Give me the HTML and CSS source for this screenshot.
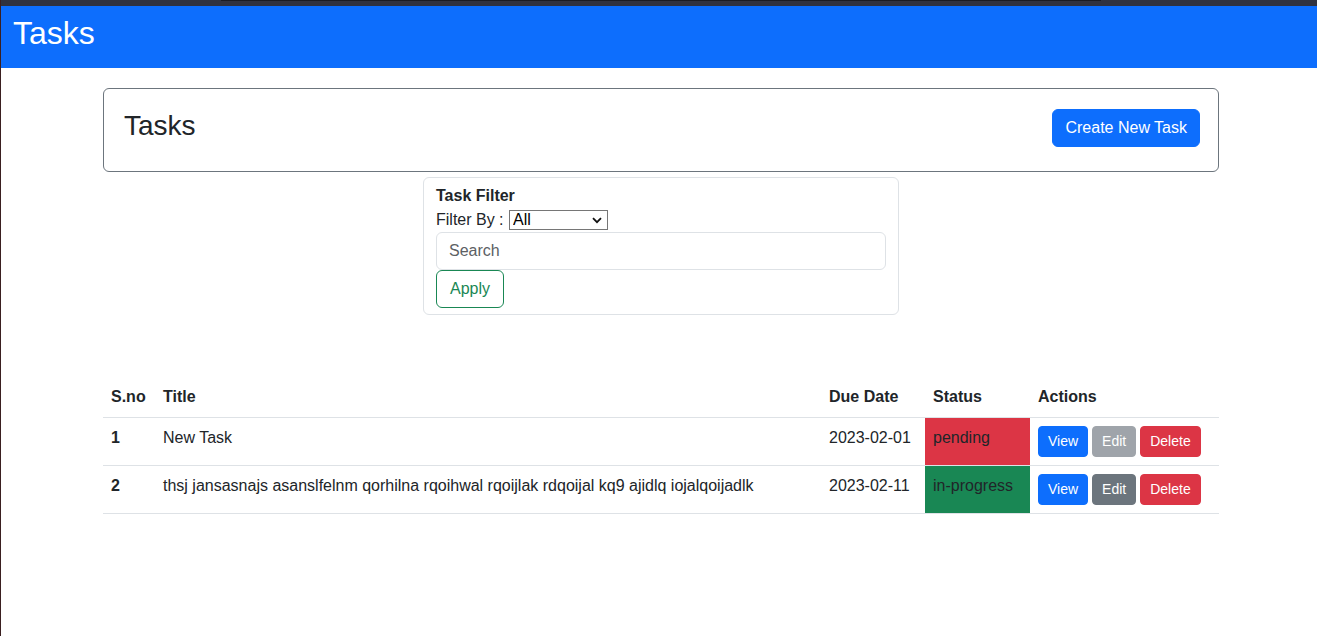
FILE: index.html
```html
<!DOCTYPE html>
<html lang="en">
<head>
<meta charset="utf-8">
<title>Tasks</title>
<link rel="stylesheet" href="styles.css">
</head>
<body>
<div class="chrome"><div class="chrome-line"></div></div>
<nav class="navbar"><span class="brand">Tasks</span></nav>
<main class="container">
  <section class="head-card">
    <h3 class="head-title">Tasks</h3>
    <button class="btn btn-primary">Create New Task</button>
  </section>

  <section class="filter-card">
    <div class="filter-title">Task Filter</div>
    <div class="filter-row">
      <label for="filterBy">Filter By : </label><span class="select-wrap"><select id="filterBy" class="select"><option>All</option><option>pending</option><option>in-progress</option><option>completed</option></select><svg class="chev" width="10" height="7" viewBox="0 0 10 7"><path d="M1 1.2 L5 5.2 L9 1.2" fill="none" stroke="#111" stroke-width="1.8"/></svg></span>
    </div>
    <input class="search" type="text" placeholder="Search">
    <button class="btn btn-outline-success">Apply</button>
  </section>

  <table class="table">
    <colgroup>
      <col class="c-sno"><col class="c-title"><col class="c-date"><col class="c-status"><col class="c-actions">
    </colgroup>
    <thead>
      <tr><th>S.no</th><th>Title</th><th>Due Date</th><th>Status</th><th>Actions</th></tr>
    </thead>
    <tbody>
      <tr>
        <th>1</th>
        <td>New Task</td>
        <td>2023-02-01</td>
        <td class="st-pending">pending</td>
        <td><div class="actions"><button class="btn-sm b-blue">View</button><button class="btn-sm b-gray disabled">Edit</button><button class="btn-sm b-red">Delete</button></div></td>
      </tr>
      <tr>
        <th>2</th>
        <td>thsj jansasnajs asanslfelnm qorhilna rqoihwal rqoijlak rdqoijal kq9 ajidlq iojalqoijadlk</td>
        <td>2023-02-11</td>
        <td class="st-progress">in-progress</td>
        <td><div class="actions"><button class="btn-sm b-blue">View</button><button class="btn-sm b-gray">Edit</button><button class="btn-sm b-red">Delete</button></div></td>
      </tr>
    </tbody>
  </table>
</main>
</body>
</html>
```

FILE: styles.css
```css
* { box-sizing: border-box; }
html, body { margin: 0; padding: 0; }
body {
  font-family: "Liberation Sans", Arial, sans-serif;
  font-size: 16px;
  line-height: 24px;
  color: #212529;
  background: #fff;
  border-left: 1px solid #3a1f20;
  min-height: 636px;
}
.chrome {
  height: 6px;
  background: #30323f;
}
.chrome-line {
  width: 880px;
  height: 1px;
  margin-left: 220px;
  background: #1b1c23;
}
.navbar {
  height: 62px;
  background: #0d6efd;
  padding: 8px 12px 16px;
}
.brand {
  color: #fff;
  font-size: 32px;
  line-height: 38px;
  display: block;
}
.container {
  width: 1116px;
  margin-left: 102px;
  padding-top: 20px;
}
.head-card {
  border: 1px solid #6c757d;
  border-radius: 6px;
  padding: 20px 18px 20px 20px;
  display: flex;
  justify-content: space-between;
  align-items: flex-start;
}
.head-title {
  margin: 0 0 8px;
  font-size: 28px;
  line-height: 33.6px;
  font-weight: 500;
}
.btn {
  font-family: inherit;
  font-size: 16px;
  line-height: 24px;
  padding: 6px 12px;
  border-radius: 6px;
  border: 1px solid transparent;
  cursor: pointer;
}
.btn-primary {
  background: #0d6efd;
  border-color: #0d6efd;
  color: #fff;
}
.btn-outline-success {
  background: #fff;
  border-color: #198754;
  color: #198754;
  display: block;
  padding: 6px 13px;
}
.filter-card {
  width: 476px;
  margin: 5px auto 0;
  border: 1px solid #dee2e6;
  border-radius: 6px;
  padding: 6px 12px;
}
.filter-title { font-weight: 700; }
.filter-row { height: 24px; }
.select-wrap {
  position: relative;
  display: inline-block;
  vertical-align: top;
  margin-top: 2px;
  margin-left: 1px;
}
.select {
  -webkit-appearance: none;
  appearance: none;
  width: 99px;
  height: 20px;
  border: 1px solid #767676;
  border-radius: 0;
  background: #fff;
  font-family: inherit;
  font-size: 16px;
  line-height: 18px;
  padding: 0 0 0 3px;
  color: #000;
  display: block;
}
.chev {
  position: absolute;
  right: 6px;
  top: 7px;
  pointer-events: none;
}
.search {
  display: block;
  width: 100%;
  height: 38px;
  border: 1px solid #dee2e6;
  border-radius: 6px;
  padding: 6px 12px;
  font-family: inherit;
  font-size: 16px;
  line-height: 24px;
  color: #212529;
}
.search::placeholder { color: #5c6064; }
.table {
  width: 100%;
  margin-top: 62px;
  border-collapse: collapse;
  table-layout: fixed;
}
.c-sno { width: 52px; }
.c-title { width: 666px; }
.c-date { width: 104px; }
.c-status { width: 105px; }
.c-actions { width: 189px; }
.table th, .table td {
  padding: 8px;
  text-align: left;
  vertical-align: top;
  border-bottom: 1px solid #dee2e6;
  line-height: 24px;
}
.table th { font-weight: 700; }
.table td { font-weight: 400; }
.st-pending { background: #dc3545; }
.st-progress { background: #198754; }
.actions {
  display: flex;
  gap: 4px;
}
.btn-sm {
  font-family: inherit;
  font-size: 14px;
  line-height: 21px;
  padding: 4px 9px;
  border-radius: 4px;
  border: 1px solid transparent;
  color: #fff;
  cursor: pointer;
}
.b-blue { background: #0d6efd; border-color: #0d6efd; }
.b-gray { background: #6c757d; border-color: #6c757d; }
.b-red { background: #dc3545; border-color: #dc3545; }
.disabled { opacity: 0.65; }
```
